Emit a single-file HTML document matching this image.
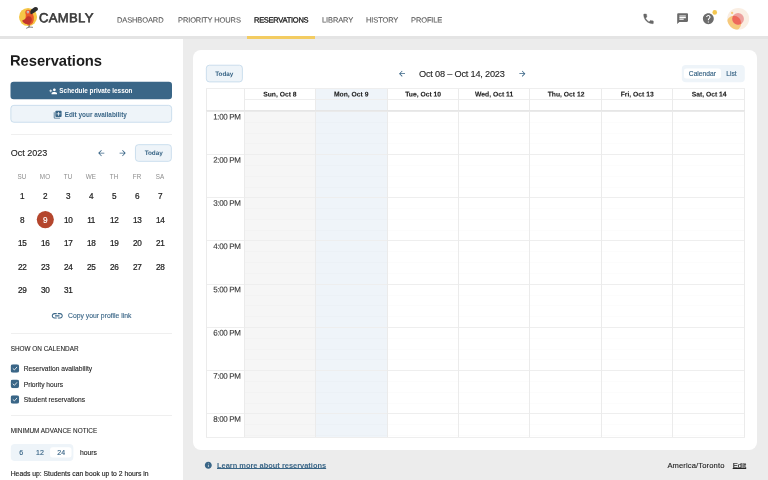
<!DOCTYPE html>
<html>
<head>
<meta charset="utf-8">
<title>Reservations</title>
<style>
*{box-sizing:border-box;margin:0;padding:0}
html,body{width:768px;height:480px;overflow:hidden}
body{font-family:"Liberation Sans",sans-serif;background:#ececec;position:relative;color:#222;-webkit-font-smoothing:antialiased}
#root{position:absolute;left:0;top:0;width:768px;height:480px;will-change:transform;overflow:hidden}
.abs{position:absolute}
.t{position:absolute;white-space:nowrap;line-height:1}
/* header */
#hdr{position:absolute;left:0;top:0;width:768px;height:36px;background:#fff}
#hshadow{position:absolute;left:0;top:36px;width:768px;height:3px;background:#e4e4e4}
.nav{position:absolute;transform-origin:0 0;transform:translateY(0.45px) rotate(0.05deg);top:16px;font-size:7.5px;line-height:8px;color:#606060;white-space:nowrap;letter-spacing:-0.12px;-webkit-text-stroke:0.12px #606060}
.nav.act{color:#1c1c1c;font-weight:normal;-webkit-text-stroke:0.3px #1c1c1c;letter-spacing:-0.27px}
#uline{position:absolute;left:247px;top:36px;width:68.2px;height:3px;background:#f3cc62}
/* sidebar */
#side{position:absolute;left:0;top:39px;width:183px;height:441px;background:#fff}
.hr{position:absolute;left:10.5px;width:161.5px;height:1px;background:#efefef}
.btn{position:absolute;left:10.5px;width:161.5px;height:17.3px;border-radius:3.5px;text-align:center;font-weight:bold;font-size:6.4px;line-height:17.3px;white-space:nowrap;padding-right:1.2px}
.btn.pri{color:#fff}
.btn.sec{color:#3a6687}
.dow{position:absolute;top:172.7px;width:23px;text-align:center;font-size:6.3px;line-height:7px;color:#8c8c8c;letter-spacing:0.1px}
.d{position:absolute;width:23px;text-align:center;font-size:8.2px;line-height:9px;color:#222;-webkit-text-stroke:0.22px #222;letter-spacing:-0.35px;padding-left:0.3px}
.chk{position:absolute;left:11px;width:8px;height:8px;border-radius:2px;background:#3a6687}
.lbl{position:absolute;left:23.7px;font-size:6.7px;line-height:8px;color:#222;white-space:nowrap;-webkit-text-stroke:0.1px #222}
.cap{position:absolute;left:10.7px;font-size:6.4px;line-height:8px;color:#222;white-space:nowrap;-webkit-text-stroke:0.08px #222}
/* main */
#card{position:absolute;left:193px;top:50px;width:564px;height:400px;background:#fff;border-radius:8px}
.hd{position:absolute;top:89px;height:10.5px;text-align:center;font-size:6.75px;line-height:11px;font-weight:bold;color:#222;white-space:nowrap;-webkit-text-stroke:0.1px #222;padding-left:0.9px;transform:translateY(-0.4px) rotate(0.05deg)}
.tm{position:absolute;left:205.2px;width:35.6px;text-align:right;font-size:8px;line-height:9px;color:#333;white-space:nowrap;letter-spacing:-0.35px;-webkit-text-stroke:0.1px #333}
</style>
</head>
<body>
<div id="root">
<!-- HEADER -->
<div id="hdr"></div>
<div id="hshadow"></div>
<div id="uline"></div>
<div class="t" id="logo" style="left:38.9px;top:11px;font-size:13.1px;line-height:14px;color:#383838;letter-spacing:0.3px;-webkit-text-stroke:0.6px #383838;transform-origin:0 0;transform:translateY(0.25px) rotate(0.05deg)">CAMBLY</div>

<div class="nav" style="left:117.2px">DASHBOARD</div>
<div class="nav" style="left:177.5px">PRIORITY HOURS</div>
<div class="nav act" style="left:253.5px">RESERVATIONS</div>
<div class="nav" style="left:321.6px">LIBRARY</div>
<div class="nav" style="left:366px">HISTORY</div>
<div class="nav" style="left:411.2px">PROFILE</div>

<!-- header icons -->

<!-- SIDEBAR -->
<div id="side"></div>
<div id="card"></div>
<svg class="abs" style="left:0;top:0;pointer-events:none" width="768" height="480" viewBox="0 0 768 480">
<rect x="10.5" y="81.85" width="161.5" height="17.4" rx="3.2" fill="#3a6687"/>
<rect x="10.85" y="105.35" width="160.8" height="16.9" rx="3" fill="#eef4f9" stroke="#b9d3e6" stroke-width="0.7"/>
<rect x="135.45" y="144.65" width="35.9" height="16.7" rx="3" fill="#eef4f9" stroke="#b9d3e6" stroke-width="0.7"/>
<rect x="206.35" y="65.2" width="36.05" height="16.7" rx="3" fill="#eef4f9" stroke="#b9d3e6" stroke-width="0.7"/>
<rect x="10.8" y="443.9" width="62.6" height="17" rx="4" fill="#eef4f9"/>
<rect x="50.1" y="447.2" width="21.4" height="10.2" rx="2.5" fill="#fff"/>
<rect x="681.8" y="65" width="63" height="17.2" rx="4" fill="#eef4f9"/>
<rect x="683.9" y="68.5" width="37.1" height="10.1" rx="2.5" fill="#fff"/>
</svg>
<div class="t" style="left:10.3px;top:53px;font-size:14.8px;line-height:15px;font-weight:bold;color:#1c1c1c;letter-spacing:-0.08px;transform-origin:0 0;transform:translateY(0.62px) rotate(0.04deg)">Reservations</div>
<div class="btn pri" style="top:82px"><svg style="vertical-align:-2.1px;margin-right:2px" width="8.6" height="8.6" viewBox="0 0 24 24"><path fill="#fff" d="M15 12c2.210 0 4-1.790 4-4s-1.790-4-4-4-4 1.790-4 4 1.790 4 4 4zm-9-2V7H4v3H1v2h3v3h2v-3h3v-2H6zm9 4c-2.670 0-8 1.340-8 4v2h16v-2c0-2.660-5.330-4-8-4z"/></svg>Schedule private lesson</div>
<div class="btn sec" style="top:105.5px;padding-right:2.4px"><svg style="vertical-align:-2.4px;margin-right:2px" width="9.4" height="9.4" viewBox="0 0 24 24"><path fill="#3a6687" d="M4 6H2v14c0 1.100.9 2 2 2h14v-2H4V6zm16-4H8c-1.100 0-2 .9-2 2v12c0 1.100.9 2 2 2h12c1.100 0 2-.9 2-2V4c0-1.100-.9-2-2-2zm-1 9h-4v4h-2v-4H9V9h4V5h2v4h4v2z"/></svg>Edit your availability</div>
<div class="hr" style="top:133.5px"></div>

<div class="t" style="left:10.7px;top:148.3px;font-size:9px;line-height:10px;color:#222;-webkit-text-stroke:0.12px #222">Oct 2023</div>
<div class="btn sec" style="left:135.2px;width:36.6px;top:144.3px;font-size:6.4px;letter-spacing:-0.05px;padding:0 0 0 0.8px;line-height:18.3px;transform:translateY(0.1px) rotate(0.05deg)">Today</div>

<div class="dow" style="left:10.5px">SU</div>
<div class="dow" style="left:33.5px">MO</div>
<div class="dow" style="left:56.5px">TU</div>
<div class="dow" style="left:79.5px">WE</div>
<div class="dow" style="left:102.5px">TH</div>
<div class="dow" style="left:125.5px">FR</div>
<div class="dow" style="left:148.5px">SA</div>

<svg class="abs" style="left:0;top:0;pointer-events:none" width="192" height="480" viewBox="0 0 192 480"><circle cx="45.3" cy="219.6" r="8.55" fill="#b4462d"/></svg>
<div id="cal">
<div class="d" style="left:10.5px;top:191.66px">1</div>
<div class="d" style="left:33.5px;top:191.66px">2</div>
<div class="d" style="left:56.5px;top:191.66px">3</div>
<div class="d" style="left:79.5px;top:191.66px">4</div>
<div class="d" style="left:102.5px;top:191.66px">5</div>
<div class="d" style="left:125.5px;top:191.66px">6</div>
<div class="d" style="left:148.5px;top:191.66px">7</div>
<div class="d" style="left:10.5px;top:215.66px">8</div>
<div class="d" style="left:33.5px;top:215.66px;color:#fff;-webkit-text-stroke:0.2px #fff">9</div>
<div class="d" style="left:56.5px;top:215.66px">10</div>
<div class="d" style="left:79.5px;top:215.66px">11</div>
<div class="d" style="left:102.5px;top:215.66px">12</div>
<div class="d" style="left:125.5px;top:215.66px">13</div>
<div class="d" style="left:148.5px;top:215.66px">14</div>
<div class="d" style="left:10.5px;top:238.66px">15</div>
<div class="d" style="left:33.5px;top:238.66px">16</div>
<div class="d" style="left:56.5px;top:238.66px">17</div>
<div class="d" style="left:79.5px;top:238.66px">18</div>
<div class="d" style="left:102.5px;top:238.66px">19</div>
<div class="d" style="left:125.5px;top:238.66px">20</div>
<div class="d" style="left:148.5px;top:238.66px">21</div>
<div class="d" style="left:10.5px;top:262.66px">22</div>
<div class="d" style="left:33.5px;top:262.66px">23</div>
<div class="d" style="left:56.5px;top:262.66px">24</div>
<div class="d" style="left:79.5px;top:262.66px">25</div>
<div class="d" style="left:102.5px;top:262.66px">26</div>
<div class="d" style="left:125.5px;top:262.66px">27</div>
<div class="d" style="left:148.5px;top:262.66px">28</div>
<div class="d" style="left:10.5px;top:285.66px">29</div>
<div class="d" style="left:33.5px;top:285.66px">30</div>
<div class="d" style="left:56.5px;top:285.66px">31</div>
</div><!--/cal-->

<div class="t" style="left:68px;top:312.4px;font-size:6.8px;line-height:7px;color:#3a6687;-webkit-text-stroke:0.12px #3a6687">Copy your profile link</div>

<div class="hr" style="top:333px"></div>
<div class="cap" style="top:344.8px">SHOW ON CALENDAR</div>
<div class="lbl" style="top:364.8px">Reservation availability</div>
<div class="lbl" style="top:381px">Priority hours</div>
<div class="lbl" style="top:395.7px">Student reservations</div>
<div class="hr" style="top:414.6px"></div>
<div class="cap" style="top:427.2px">MINIMUM ADVANCE NOTICE</div>
<div class="t" style="left:11px;width:20.6px;text-align:center;top:448.6px;font-size:7px;line-height:8px;color:#3a6687;-webkit-text-stroke:0.15px #3a6687">6</div>
<div class="t" style="left:29.7px;width:20.6px;text-align:center;top:448.6px;font-size:7px;line-height:8px;color:#3a6687;-webkit-text-stroke:0.15px #3a6687">12</div>
<div class="t" style="left:50.7px;width:21px;text-align:center;top:448.6px;font-size:7px;line-height:8px;color:#3a6687;-webkit-text-stroke:0.15px #3a6687">24</div>
<div class="t" style="left:80px;top:449px;font-size:6.8px;line-height:8px;color:#222;-webkit-text-stroke:0.12px #222">hours</div>
<div class="t" style="left:10.7px;top:470.3px;font-size:6.8px;line-height:8px;color:#222;-webkit-text-stroke:0.14px #222">Heads up: Students can book up to 2 hours in</div>

<!-- MAIN -->
<div class="btn sec" style="left:206.1px;width:36.6px;top:64.9px;font-size:6.4px;letter-spacing:-0.05px;padding:0;line-height:18.3px;transform:translateY(0.1px) rotate(0.05deg)">Today</div>
<div class="t" style="left:419px;top:68.6px;font-size:9.2px;line-height:10px;color:#222;letter-spacing:-0.2px;-webkit-text-stroke:0.1px #222">Oct 08 – Oct 14, 2023</div>
<div class="t" style="left:688.8px;top:70.2px;font-size:6.7px;line-height:7px;color:#3a6687;-webkit-text-stroke:0.15px #3a6687">Calendar</div>
<div class="t" style="left:726.3px;top:70.2px;font-size:6.7px;line-height:7px;color:#3a6687;-webkit-text-stroke:0.15px #3a6687">List</div>

<div id="grid">
<div class="abs" style="left:244.4px;top:111.0px;width:71.0px;height:326.0px;background:#f6f6f6"></div>
<div class="abs" style="left:315.4px;top:88.5px;width:71.6px;height:348.5px;background:#eff4f9"></div>
<div class="abs" style="left:244.4px;top:121.8px;width:499.8px;height:0.8px;background:rgba(0,0,0,0.013)"></div>
<div class="abs" style="left:244.4px;top:132.6px;width:499.8px;height:0.8px;background:rgba(0,0,0,0.013)"></div>
<div class="abs" style="left:244.4px;top:143.4px;width:499.8px;height:0.8px;background:rgba(0,0,0,0.013)"></div>
<div class="abs" style="left:244.4px;top:165.0px;width:499.8px;height:0.8px;background:rgba(0,0,0,0.013)"></div>
<div class="abs" style="left:244.4px;top:175.8px;width:499.8px;height:0.8px;background:rgba(0,0,0,0.013)"></div>
<div class="abs" style="left:244.4px;top:186.6px;width:499.8px;height:0.8px;background:rgba(0,0,0,0.013)"></div>
<div class="abs" style="left:244.4px;top:208.2px;width:499.8px;height:0.8px;background:rgba(0,0,0,0.013)"></div>
<div class="abs" style="left:244.4px;top:219.0px;width:499.8px;height:0.8px;background:rgba(0,0,0,0.013)"></div>
<div class="abs" style="left:244.4px;top:229.8px;width:499.8px;height:0.8px;background:rgba(0,0,0,0.013)"></div>
<div class="abs" style="left:244.4px;top:251.4px;width:499.8px;height:0.8px;background:rgba(0,0,0,0.013)"></div>
<div class="abs" style="left:244.4px;top:262.2px;width:499.8px;height:0.8px;background:rgba(0,0,0,0.013)"></div>
<div class="abs" style="left:244.4px;top:273.0px;width:499.8px;height:0.8px;background:rgba(0,0,0,0.013)"></div>
<div class="abs" style="left:244.4px;top:294.6px;width:499.8px;height:0.8px;background:rgba(0,0,0,0.013)"></div>
<div class="abs" style="left:244.4px;top:305.4px;width:499.8px;height:0.8px;background:rgba(0,0,0,0.013)"></div>
<div class="abs" style="left:244.4px;top:316.2px;width:499.8px;height:0.8px;background:rgba(0,0,0,0.013)"></div>
<div class="abs" style="left:244.4px;top:337.8px;width:499.8px;height:0.8px;background:rgba(0,0,0,0.013)"></div>
<div class="abs" style="left:244.4px;top:348.6px;width:499.8px;height:0.8px;background:rgba(0,0,0,0.013)"></div>
<div class="abs" style="left:244.4px;top:359.4px;width:499.8px;height:0.8px;background:rgba(0,0,0,0.013)"></div>
<div class="abs" style="left:244.4px;top:381.0px;width:499.8px;height:0.8px;background:rgba(0,0,0,0.013)"></div>
<div class="abs" style="left:244.4px;top:391.8px;width:499.8px;height:0.8px;background:rgba(0,0,0,0.013)"></div>
<div class="abs" style="left:244.4px;top:402.6px;width:499.8px;height:0.8px;background:rgba(0,0,0,0.013)"></div>
<div class="abs" style="left:244.4px;top:424.2px;width:499.8px;height:0.8px;background:rgba(0,0,0,0.013)"></div>
<div class="abs" style="left:244.4px;top:435.0px;width:499.8px;height:0.8px;background:rgba(0,0,0,0.013)"></div>
<div class="abs" style="left:206.4px;top:154px;width:537.8px;height:1px;background:#eeeeee"></div>
<div class="abs" style="left:206.4px;top:197px;width:537.8px;height:1px;background:#eeeeee"></div>
<div class="abs" style="left:206.4px;top:240px;width:537.8px;height:1px;background:#eeeeee"></div>
<div class="abs" style="left:206.4px;top:284px;width:537.8px;height:1px;background:#eeeeee"></div>
<div class="abs" style="left:206.4px;top:327px;width:537.8px;height:1px;background:#eeeeee"></div>
<div class="abs" style="left:206.4px;top:370px;width:537.8px;height:1px;background:#eeeeee"></div>
<div class="abs" style="left:206.4px;top:413px;width:537.8px;height:1px;background:#eeeeee"></div>
<div class="abs" style="left:206.4px;top:88.1px;width:538.3px;height:0.9px;background:#eeeeee"></div>
<div class="abs" style="left:244.4px;top:99.1px;width:499.8px;height:0.9px;background:#eeeeee"></div>
<div class="abs" style="left:206.4px;top:436.6px;width:538.3px;height:0.9px;background:#eeeeee"></div>
<div class="abs" style="left:206.0px;top:88.5px;width:0.9px;height:348.5px;background:#ebebeb"></div>
<div class="abs" style="left:244.0px;top:88.5px;width:0.9px;height:348.5px;background:#ebebeb"></div>
<div class="abs" style="left:315.0px;top:88.5px;width:0.9px;height:348.5px;background:#ebebeb"></div>
<div class="abs" style="left:386.6px;top:88.5px;width:0.9px;height:348.5px;background:#ebebeb"></div>
<div class="abs" style="left:458.0px;top:88.5px;width:0.9px;height:348.5px;background:#ebebeb"></div>
<div class="abs" style="left:529.4px;top:88.5px;width:0.9px;height:348.5px;background:#ebebeb"></div>
<div class="abs" style="left:600.8px;top:88.5px;width:0.9px;height:348.5px;background:#ebebeb"></div>
<div class="abs" style="left:672.4px;top:88.5px;width:0.9px;height:348.5px;background:#ebebeb"></div>
<div class="abs" style="left:743.8px;top:88.5px;width:0.9px;height:348.5px;background:#ebebeb"></div>
<div class="abs" style="left:206.4px;top:110px;width:538.3px;height:2px;background:linear-gradient(#e6e6e6 50%,#eaeaea 50%)"></div>
<div class="hd" style="left:244.4px;width:71.0px">Sun, Oct 8</div>
<div class="hd" style="left:315.4px;width:71.6px">Mon, Oct 9</div>
<div class="hd" style="left:387.0px;width:71.4px">Tue, Oct 10</div>
<div class="hd" style="left:458.4px;width:71.4px">Wed, Oct 11</div>
<div class="hd" style="left:529.8px;width:71.4px">Thu, Oct 12</div>
<div class="hd" style="left:601.2px;width:71.6px">Fri, Oct 13</div>
<div class="hd" style="left:672.8px;width:71.4px">Sat, Oct 14</div>
<div class="tm" style="top:112px;transform:translateY(0.43px) rotate(0.05deg)">1:00 PM</div>
<div class="tm" style="top:155px;transform:translateY(0.63px) rotate(0.05deg)">2:00 PM</div>
<div class="tm" style="top:198px;transform:translateY(0.83px) rotate(0.05deg)">3:00 PM</div>
<div class="tm" style="top:242px;transform:translateY(0.03px) rotate(0.05deg)">4:00 PM</div>
<div class="tm" style="top:285px;transform:translateY(0.23px) rotate(0.05deg)">5:00 PM</div>
<div class="tm" style="top:328px;transform:translateY(0.43px) rotate(0.05deg)">6:00 PM</div>
<div class="tm" style="top:371px;transform:translateY(0.63px) rotate(0.05deg)">7:00 PM</div>
<div class="tm" style="top:414px;transform:translateY(0.83px) rotate(0.05deg)">8:00 PM</div>
</div><!--/grid-->

<!-- FOOTER -->
<div class="t" style="left:217px;top:462.2px;font-size:7.45px;line-height:8px;font-weight:bold;color:#3a6687;text-decoration:underline;text-underline-offset:0.2px;text-decoration-thickness:0.8px">Learn more about reservations</div>
<div class="t" style="left:667.4px;top:462.2px;font-size:7.6px;line-height:8px;color:#222;letter-spacing:0.12px;-webkit-text-stroke:0.12px #222">America/Toronto</div>
<div class="t" style="left:732.7px;top:462.2px;font-size:7.6px;line-height:8px;color:#222;text-decoration:underline;text-underline-offset:0.2px;text-decoration-thickness:0.8px;-webkit-text-stroke:0.2px #222;letter-spacing:0.1px">Edit</div>
<svg class="abs" id="icons" style="left:0;top:0;pointer-events:none" width="768" height="480" viewBox="0 0 768 480">
<svg x="14" y="2" width="30" height="30" viewBox="14 2 30 30">
  <circle cx="28.05" cy="17" r="9.05" fill="#f5c747"/>
  <path d="M25.2 12.6 Q25.3 9.6 28.3 9.7 Q30.6 9.8 31.6 12 Q33.2 13.6 33.8 16.8 Q34.3 20.6 32.8 23.1 Q31.3 25.2 28.6 25.2 L25.6 23.4 Q24.6 20.6 25.6 17.4 Q26.2 15.2 25.2 12.6 Z" fill="#e8592b"/>
  <path d="M22 20.8 Q25.6 19.4 27.2 16.5 Q29 15.9 30.6 16.7 Q32.2 18.2 31.8 20.2 Q31.2 22.8 29.4 24 Q27.4 24.4 25.2 23.7 Q23.2 22.8 22 20.8 Z" fill="#c2352b"/>
  <path d="M30.3 13.2 Q29.8 10.8 31.3 9.5 L34.4 7.2 Q36.5 6.5 37.7 7.9 Q38.4 9.1 37.5 10.2 L35.2 12.1 L31.9 14.1 Q30.7 14.3 30.3 13.2 Z" fill="#2d2d2d"/>
  <circle cx="27.9" cy="12.1" r="1.3" fill="#d2c9c9"/>
  <circle cx="27.9" cy="12.15" r="0.55" fill="#9a8f8f"/>
  <path d="M29.3 24.8 L29 27 M29 27 L26.6 28.2 M29 27 L32.6 27.3" stroke="#555" stroke-width="0.75" fill="none" stroke-linecap="round"/>
</svg>
<svg x="642" y="12.3" width="13" height="13" viewBox="0 0 24 24"><path fill="#686868" stroke="#686868" stroke-width="0.6" d="M6.62 10.79c1.44 2.83 3.76 5.14 6.59 6.59l2.2-2.2c.27-.27.67-.36 1.02-.24 1.12.37 2.33.57 3.57.57.55 0 1 .45 1 1V20c0 .55-.45 1-1 1-9.390 0-17-7.610-17-17 0-.55.45-1 1-1h3.5c.55 0 1 .45 1 1 0 1.250.2 2.450.57 3.570.11.350.03.740-.250 1.020l-2.2 2.200z"/></svg>
<svg x="676.1" y="12.2" width="13" height="13" viewBox="0 0 24 24"><path fill="#6a6a6a" d="M20 2H4c-1.100 0-1.990.9-1.990 2L2 22l4-4h14c1.100 0 2-.9 2-2V4c0-1.100-.9-2-2-2zM6 9h12v2H6V9zm8 5H6v-2h8v2zm4-6H6V6h12v2z"/></svg>
<svg x="701.8" y="12.15" width="13.1" height="13.1" viewBox="0 0 24 24"><path fill="#6c6c6c" d="M12 2C6.480 2 2 6.480 2 12s4.480 10 10 10 10-4.480 10-10S17.520 2 12 2zm1 17h-2v-2h2v2zm2.070-7.750l-.9.920C13.450 12.900 13 13.500 13 15h-2v-.5c0-1.100.45-2.100 1.170-2.830l1.240-1.260c.37-.36.590-.86.590-1.410 0-1.100-.9-2-2-2s-2 .9-2 2H8c0-2.210 1.790-4 4-4s4 1.790 4 4c0 .88-.36 1.680-.93 2.250z"/></svg>
<circle cx="714.75" cy="12.4" r="2.3" fill="#f4c74f"/>
<svg x="724" y="4" width="30" height="30" viewBox="724 4 30 30">
  <defs><clipPath id="av"><circle cx="738.2" cy="18.85" r="10.95"/></clipPath><clipPath id="rc"><circle cx="738.07" cy="18.96" r="5.85"/></clipPath></defs>
  <circle cx="738.2" cy="18.85" r="10.95" fill="#faeee3"/>
  <g clip-path="url(#av)">
    <circle cx="733.9" cy="23.2" r="7.4" fill="#f6c97c"/>
    <circle cx="738.07" cy="18.96" r="5.85" fill="#eda19d"/>
    <g clip-path="url(#rc)"><circle cx="733.9" cy="23.2" r="7.4" fill="#ee695b"/></g>
    <circle cx="732.1" cy="13" r="1.15" fill="#f6c97c"/>
  </g>
</svg>
<svg x="96.65" y="148.5" width="9.2" height="9.2" viewBox="0 0 24 24"><path fill="#3a6687" d="M20 11H7.830l5.590-5.590L12 4l-8 8 8 8 1.410-1.410L7.830 13H20v-2z"/></svg>
<svg x="118.05" y="148.5" width="9.2" height="9.2" viewBox="0 0 24 24"><path fill="#3a6687" d="M12 4l-1.410 1.410L16.170 11H4v2h12.170l-5.580 5.590L12 20l8-8z"/></svg>
<svg x="50.67" y="309.25" width="13.2" height="13.2" viewBox="0 0 24 24"><path fill="#3a6687" d="M3.900 12c0-1.710 1.390-3.100 3.100-3.100h4V7H7c-2.760 0-5 2.240-5 5s2.240 5 5 5h4v-1.900H7c-1.710 0-3.100-1.390-3.100-3.100zM8 13h8v-2H8v2zm9-6h-4v1.900h4c1.710 0 3.100 1.390 3.100 3.100s-1.390 3.100-3.100 3.100h-4V17h4c2.760 0 5-2.240 5-5s-2.240-5-5-5z"/></svg>
<svg x="10.6" y="364.2" width="8.6" height="8.6" viewBox="0 0 16 16"><rect width="16" height="16" rx="4.4" fill="#3a6687"/><path d="M4.6 8.3 L7.1 10.6 L11.5 5.6" stroke="#fff" stroke-width="1.5" fill="none" stroke-linecap="round" stroke-linejoin="round"/></svg>
<svg x="10.6" y="379.6" width="8.6" height="8.6" viewBox="0 0 16 16"><rect width="16" height="16" rx="4.4" fill="#3a6687"/><path d="M4.6 8.3 L7.1 10.6 L11.5 5.6" stroke="#fff" stroke-width="1.5" fill="none" stroke-linecap="round" stroke-linejoin="round"/></svg>
<svg x="10.6" y="395.2" width="8.6" height="8.6" viewBox="0 0 16 16"><rect width="16" height="16" rx="4.4" fill="#3a6687"/><path d="M4.6 8.3 L7.1 10.6 L11.5 5.6" stroke="#fff" stroke-width="1.5" fill="none" stroke-linecap="round" stroke-linejoin="round"/></svg>
<svg x="397.5" y="69.15" width="9" height="9" viewBox="0 0 24 24"><path fill="#3a6687" d="M20 11H7.830l5.590-5.590L12 4l-8 8 8 8 1.410-1.410L7.830 13H20v-2z"/></svg>
<svg x="517.85" y="69.15" width="9" height="9" viewBox="0 0 24 24"><path fill="#3a6687" d="M12 4l-1.410 1.410L16.170 11H4v2h12.170l-5.580 5.590L12 20l8-8z"/></svg>
<svg x="204.1" y="461.1" width="8.4" height="8.4" viewBox="0 0 24 24"><path fill="#3a6687" d="M12 2C6.480 2 2 6.480 2 12s4.480 10 10 10 10-4.480 10-10S17.520 2 12 2zm1 15h-2v-6h2v6zm0-8h-2V7h2v2z"/></svg>
</svg>
</div>
</body>
</html>
